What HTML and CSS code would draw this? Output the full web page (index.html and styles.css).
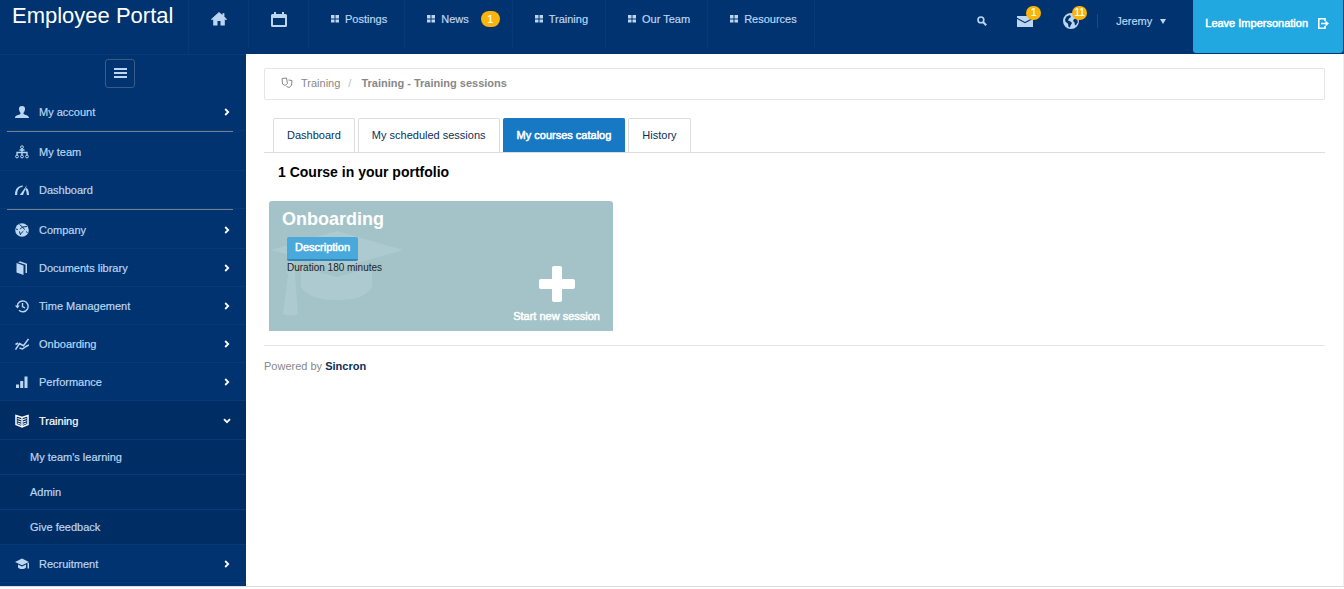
FILE: index.html
```html
<!DOCTYPE html>
<html lang="en">
<head>
    <title>Employee Portal - Training sessions</title>
    <meta charset="UTF-8">
    <meta name="viewport" content="width=device-width, initial-scale=1.0">
    <link rel="stylesheet" href="styles.css">
</head>
<body>
    <!-- shared icons -->
    <svg class="sprite" aria-hidden="true">
        <symbol id="dots" viewBox="0 0 8 8"><path d="M0 0h3.500v3.500H0zM4.500 0H8v3.500H4.500zM0 4.500h3.500v3H0zM4.500 4.500H8v3H4.500z"/></symbol>
        <symbol id="chevron" viewBox="0 0 6 8"><path d="M1.2 1l3 3-3 3" fill="none" stroke="currentColor" stroke-width="1.8"/></symbol>
    </svg>

    <header class="topbar">
        <a class="brand" href="#">Employee Portal</a>
        <nav class="topnav">
            <a class="nav-icon" href="#" aria-label="Home">
                <svg width="16" height="14" viewBox="0 0 16 14"><path d="M8 0L0 7.2l1 1L2.2 7.2V13.5h4.3V9h3v4.5h4.3V7.2L15 8.2l1-1-2.6-2.4V1.2h-2v1.8z"/></svg>
            </a>
            <a class="nav-icon" href="#" aria-label="Calendar">
                <svg width="16" height="15" viewBox="0 0 16 15"><path fill-rule="evenodd" d="M1.5 2H3V0h2v2h6V0h2v2h1.5Q16 2 16 3.5v10Q16 15 14.500 15h-13Q0 15 0 13.500v-10Q0 2 1.500 2zM2 6v7h12V6z"/></svg>
            </a>
            <a class="nav-link" href="#"><svg class="dots"><use href="#dots"/></svg>Postings</a>
            <a class="nav-link has-badge" href="#"><svg class="dots"><use href="#dots"/></svg>News<span class="badge">1</span></a>
            <a class="nav-link" href="#"><svg class="dots"><use href="#dots"/></svg>Training</a>
            <a class="nav-link" href="#"><svg class="dots"><use href="#dots"/></svg>Our Team</a>
            <a class="nav-link" href="#"><svg class="dots"><use href="#dots"/></svg>Resources</a>
        </nav>
        <div class="tools">
            <button class="tool" type="button" aria-label="Search">
                <svg class="line" width="10" height="10" viewBox="0 0 10 10"><circle cx="3.900" cy="3.900" r="2.900" stroke-width="1.600"/><path d="M6 6l3.200 3.200" stroke-width="2"/></svg>
            </button>
            <button class="tool" type="button" aria-label="Messages">
                <svg width="16" height="11" viewBox="0 0 16 11"><path d="M0 0h16v1.800L8 6 0 1.800z"/><path d="M0 3l8 4.200L16 3v8H0z"/></svg>
                <span class="bubble">1</span>
            </button>
            <button class="tool" type="button" aria-label="Alerts">
                <svg width="16" height="16" viewBox="0 0 16 16"><path fill-rule="evenodd" d="M8 0a8 8 0 1 0 0 16A8 8 0 0 0 8 0zM3.500 3.500L7 2l1 2-2 1.500-1 2 2.500 1L9 10l-1.500 2.500-.5 2-1.500-.7-.5-3-2.500-2-.5-2.300zM11 6l3-.5.800 3.500-1.300 2.500-1.500 1-.5-3L10 8z"/></svg>
                <span class="bubble">11</span>
            </button>
            <button class="user" type="button">Jeremy <span class="caret"></span></button>
            <a class="leave" href="#">Leave Impersonation
                <svg width="11" height="11" viewBox="0 0 11 11"><path d="M7 3V.8H.8v9.400H7V8" fill="none" stroke="currentColor" stroke-width="1.600"/><path d="M3 4.700h4.500V2.500L11 5.500 7.500 8.500V6.300H3z"/></svg>
            </a>
        </div>
    </header>

    <div class="layout">
        <aside class="sidebar">
            <button class="menu-toggle" type="button" aria-label="Toggle menu">
                <svg width="13" height="10" viewBox="0 0 13 10"><path d="M0 0h13v2H0zM0 4h13v2H0zM0 8h13v2H0z"/></svg>
            </button>
            <ul class="menu">
                <li><a href="#">
                    <svg class="icon" viewBox="0 0 14 14"><path d="M7 1C4.500 1 3.800 2.500 4 4.200c.1 1.600.8 2.800 1.500 3.500v1.300C4 10 0 10 0 13h14c0-3-4-3-5.500-4V7.700C9.200 7 9.900 5.800 10 4.200 10.200 2.500 9.500 1 7 1z"/></svg>
                    My account<svg class="chevron"><use href="#chevron"/></svg></a></li>
            </ul>
            <ul class="menu">
                <li><a href="#">
                    <svg class="icon line" viewBox="0 0 14 14"><circle cx="7" cy="2.200" r="1.400"/><circle cx="2" cy="11.500" r="1.400"/><circle cx="7" cy="11.500" r="1.400"/><circle cx="12" cy="11.500" r="1.400"/><path d="M7 3.600v6.500M4.500 5h5M2 10V7.500h10V10" stroke-width="1.300"/></svg>
                    My team</a></li>
                <li><a href="#">
                    <svg class="icon" viewBox="0 0 14 14"><path d="M0 12C0 6 3 2.500 8 2.500l-.6 1.600C4 4.300 2.200 7 2.200 12zM12 2L8 12H4.800zM11.500 4.700c1.700 1.400 2.500 3.800 2.500 7.300h-2.200c0-2.500-.4-4-1.400-5.200z"/></svg>
                    Dashboard</a></li>
            </ul>
            <ul class="menu">
                <li><a href="#">
                    <svg class="icon" viewBox="0 0 14 14"><circle cx="7" cy="7" r="6.800"/><path class="cut" d="M1 6l3 1 3.500-3L4.500 1.500M4 7l1.500 5M7.500 4l5 6M5.500 11l4-4M7.500 4l4.500-.5"/><circle cx="4.200" cy="7" r="1.500"/><circle cx="9.800" cy="8" r="1.600"/></svg>
                    Company<svg class="chevron"><use href="#chevron"/></svg></a></li>
                <li><a href="#">
                    <svg class="icon" viewBox="0 0 14 14"><path d="M1.500 2L8.500 4.500V14L1.500 11.500zM3 1.300L5 .3l7 2.500V12h-1.500V3.800z"/></svg>
                    Documents library<svg class="chevron"><use href="#chevron"/></svg></a></li>
                <li><a href="#">
                    <svg class="icon line" viewBox="0 0 14 14"><path d="M2.300 7A5.400 5.400 0 1 1 4 11.300M7.500 4v3.500l2.500 1.500" stroke-width="1.400"/><path class="solid" d="M0 6.500h4.800L2.400 9.500z"/></svg>
                    Time Management<svg class="chevron"><use href="#chevron"/></svg></a></li>
                <li><a href="#">
                    <svg class="icon line" viewBox="0 0 14 14"><path d="M.5 12.500l4-6 4 2.200L13.500 2M.5 7.500L3 6M4.500 11l3 1L11 9.500l3-1.500" stroke-width="1.500"/></svg>
                    Onboarding<svg class="chevron"><use href="#chevron"/></svg></a></li>
                <li><a href="#">
                    <svg class="icon" viewBox="0 0 14 14"><path d="M1 9.500h3V13H1zM5.200 6h3v7h-3zM9.500 1.500h3V13h-3z"/></svg>
                    Performance<svg class="chevron"><use href="#chevron"/></svg></a></li>
                <li class="active"><a href="#">
                    <svg class="icon line" viewBox="0 0 14 14"><path d="M1 1.500l6 2 6-2v9l-6 2.500-6-2.500zM7 3.500V13" stroke-width="1.500"/><path d="M2.500 4.500L6 5.700M2.500 6.800L6 8M2.500 9L6 10.300M11.500 4.500L8 5.700M11.500 6.800L8 8M11.500 9L8 10.300"/></svg>
                    Training<svg class="chevron open"><use href="#chevron"/></svg></a>
                    <ul class="submenu">
                        <li><a href="#">My team's learning</a></li>
                        <li><a href="#">Admin</a></li>
                        <li><a href="#">Give feedback</a></li>
                    </ul>
                </li>
                <li><a href="#">
                    <svg class="icon" viewBox="0 0 14 14"><path d="M7 1.500L0 5l7 3.300L14 5z"/><path d="M3 7.500v3c2 2 6 2 8 0v-3L7 9.400zM12.500 6H14v5.500h-1.500z"/></svg>
                    Recruitment<svg class="chevron"><use href="#chevron"/></svg></a></li>
            </ul>
        </aside>

        <main class="content">
            <nav class="breadcrumb" aria-label="Breadcrumb">
                <svg class="line" width="12" height="12" viewBox="0 0 12 12"><path d="M1 1.500L5.500 1 6.500 6.500 4 8.500 1.500 7zM7.500 3l3.500.5-.5 5L8 10.500 5.500 9.500"/></svg>
                <a href="#">Training</a>
                <span class="slash">/</span>
                <strong>Training - Training sessions</strong>
            </nav>

            <div class="tabs">
                <a class="tab" href="#">Dashboard</a>
                <a class="tab" href="#">My scheduled sessions</a>
                <a class="tab selected" href="#">My courses catalog</a>
                <a class="tab" href="#">History</a>
            </div>

            <h1>1 Course in your portfolio</h1>

            <section class="course">
                <svg class="watermark" width="132" height="86" viewBox="0 0 132 86"><path d="M66 0L0 19l18 5v13q-4 3-1 7l-5 39q7 3 15 0l-3-40q2-4-1-7V26l43 12 66-19z"/><path d="M30 36l36 10 35-10v20q-7 13-35 13T30 56z"/></svg>
                <div class="course-info">
                    <h2>Onboarding</h2>
                    <button class="btn" type="button">Description</button>
                    <p>Duration 180 minutes</p>
                </div>
                <a class="start" href="#">
                    <svg width="36" height="36" viewBox="0 0 36 36"><path d="M15 0h6q2 0 2 2v11h11q2 0 2 2v6q0 2-2 2H23v11q0 2-2 2h-6q-2 0-2-2V23H2q-2 0-2-2v-6q0-2 2-2h11V2q0-2 2-2z"/></svg>
                    Start new session
                </a>
            </section>

            <footer>Powered by <a href="#">Sincron</a></footer>
        </main>
    </div>
</body>
</html>
```
FILE: styles.css
```css
* { box-sizing: border-box; }
body {
    font-family: "Liberation Sans", Arial, sans-serif;
    font-size: 11px;
    line-height: 16px;
    color: #888;
    background: #fff;
    margin: 0;
    padding-bottom: 2px;
    min-height: 100vh;
    display: flex;
    flex-direction: column;
}
a { color: inherit; text-decoration: none; }
button {
    font: inherit;
    color: inherit;
    background: none;
    border: none;
    padding: 0;
    cursor: pointer;
}
svg { fill: currentColor; flex: none; }
ul { list-style: none; margin: 0; padding: 0; }
.sprite { position: absolute; width: 0; height: 0; }
.line { fill: none; stroke: currentColor; }

/* top bar */
.topbar {
    display: flex;
    height: 54px;
    background: #00336f;
    color: #bcd6f2;
    -webkit-text-stroke: 0.2px;
}
.brand {
    width: 189px;
    padding: 4px 0 0 12px;
    font-size: 22px;
    line-height: 24px;
    color: #fff;
    border-right: 1px solid #063a78;
    -webkit-text-stroke: 0;
}
.topnav { display: flex; }
.topnav a {
    display: flex;
    height: 48px;
    border-right: 1px solid #063a78;
}
.topnav .nav-icon {
    width: 60px;
    justify-content: center;
    padding-top: 12px;
}
.nav-link {
    align-items: flex-start;
    padding: 11px 17px 0 22px;
}
.topnav .has-badge { padding-right: 12px; }
.dots {
    width: 8px;
    height: 8px;
    margin: 4px 6px 0 0;
}
.badge {
    width: 19px;
    margin-left: 12px;
    border-radius: 8px;
    background: #fbb40a;
    color: #fff;
    text-align: center;
}
.tools {
    display: flex;
    margin-left: auto;
}
.tool {
    position: relative;
    height: 42px;
    margin-right: 30px;
    display: flex;
    align-items: center;
}
.bubble {
    position: absolute;
    top: 6px;
    right: -8px;
    width: 15px;
    height: 14px;
    border-radius: 7px;
    background: #fbb40a;
    color: #fff;
    font-size: 10px;
    line-height: 14px;
    text-align: center;
}
.user {
    height: 14px;
    margin: 14px 27px 0 -12px;
    padding-left: 18px;
    border-left: 1px solid #1c4a82;
    display: flex;
    align-items: center;
    gap: 8px;
}
.caret {
    border: 3px solid transparent;
    border-top: 5px solid currentColor;
    border-bottom: 0;
}
.leave {
    height: 53px;
    margin-right: 1px;
    padding: 0 14px 7px 12px;
    display: flex;
    align-items: center;
    gap: 10px;
    background: #21a8e1;
    color: #fff;
    border-radius: 0 0 3px 3px;
}
.leave, .selected, .btn, .start { -webkit-text-stroke: 0.5px; }

/* sidebar */
.layout {
    display: flex;
    flex: 1;
    border-bottom: 1px solid #ddd;
}
.sidebar {
    width: 246px;
    flex: none;
    background: #00336f;
    color: #bcd6f2;
    -webkit-text-stroke: 0.2px;
    border-top: 1px solid #063a78;
}
.menu-toggle {
    display: flex;
    align-items: center;
    justify-content: center;
    width: 30px;
    height: 29px;
    margin: 4px 0 4px 105px;
    padding-bottom: 2px;
    border: 1px solid #3b5c86;
    border-radius: 3px;
}
.menu { padding-top: 1px; }
.menu + .menu::before {
    content: "";
    display: block;
    height: 1px;
    margin: -1px 13px 1px 7px;
    background: #747f8c;
}
.menu a {
    display: flex;
    align-items: center;
    height: 38px;
    padding: 0 16px 0 15px;
    border-bottom: 1px solid #063a78;
}
.icon {
    width: 14px;
    height: 14px;
    margin-right: 10px;
}
.solid { fill: currentColor; stroke: none; }
.cut { fill: none; stroke: #00336f; }
.chevron {
    width: 6px;
    height: 8px;
    margin-left: auto;
    color: #fff;
}
.open { transform: rotate(90deg); }
.active {
    padding-top: 1px;
    background: #002d63;
}
.active > a { color: #fff; }
.menu .submenu a {
    height: 35px;
    padding-left: 30px;
}

/* content */
.content {
    flex: 1;
    padding: 14px 18px 0;
    border-right: 1px solid #eee;
}
.breadcrumb {
    display: flex;
    align-items: center;
    height: 32px;
    padding: 0 16px 2px;
    border: 1px solid #e5e5e5;
    border-radius: 2px;
}
.breadcrumb a { margin: 0 8px; }
.slash { margin-right: 10px; color: #bbb; }
.tabs {
    display: flex;
    gap: 3px;
    margin-top: 18px;
    padding-left: 9px;
    border-bottom: 1px solid #ddd;
}
.tab {
    padding: 8px 13px 9px;
    border: 1px solid #ddd;
    border-bottom: 0;
    border-radius: 2px 2px 0 0;
    color: #0b3059;
}
.selected {
    background: #1779c4;
    border-color: #1779c4;
    color: #fff;
}
h1 {
    margin: 9px 0 0 14px;
    font-size: 14px;
    line-height: 20px;
    color: #000;
}
.course {
    position: relative;
    display: flex;
    justify-content: space-between;
    width: 344px;
    height: 130px;
    margin: 19px 0 14px 5px;
    padding: 6px 13px 7px;
    background: #a3c3c8;
    border-radius: 3px 3px 0 0;
    color: #fff;
}
.watermark {
    position: absolute;
    left: 2px;
    top: 30px;
    color: #accacf;
}
.course-info { position: relative; }
.course h2 {
    margin: 0 0 6px;
    font-size: 18px;
    line-height: 24px;
}
.btn {
    height: 24px;
    margin-left: 5px;
    padding: 0 8px 2px;
    background: #4aa9dc;
    border-bottom: 2px solid #2e86b8;
    border-radius: 2px;
}
.course p {
    margin: 0 0 0 5px;
    font-size: 10px;
    line-height: 14px;
    color: #222;
}
.start {
    display: flex;
    flex-direction: column;
    align-items: center;
    align-self: flex-end;
    gap: 6px;
}
footer {
    padding-top: 12px;
    border-top: 1px solid #e5e5e5;
}
footer a { color: #0b3059; font-weight: bold; }
```
